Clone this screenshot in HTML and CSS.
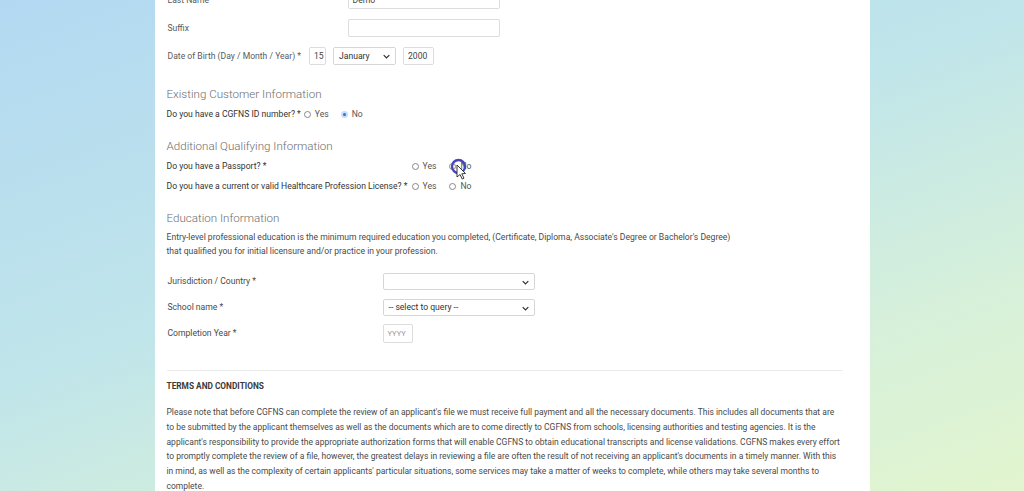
FILE: index.html
```html
<!DOCTYPE html>
<html lang="en">
<head>
    <meta charset="UTF-8">
    <meta name="viewport" content="width=device-width, initial-scale=1.0">
    <title>Application - CGFNS</title>
    <link rel="stylesheet" href="styles.css">
</head>
<body>
    <div class="page">
        <form class="app-form">
            <div class="row">
                <label class="field-label">Last Name *</label>
                <div class="text-input">Demo</div>
            </div>
            <div class="row">
                <label class="field-label">Suffix</label>
                <div class="text-input"></div>
            </div>
            <div class="row dob">
                <label class="dob-label">Date of Birth (Day / Month / Year) *</label>
                <div class="text-input day">15</div>
                <div class="select month">January
                    <svg viewBox="0 0 10 6"><path d="M1 1l4 4 4-4" /></svg>
                </div>
                <div class="text-input year">2000</div>
            </div>

            <h3 class="sec-title">Existing Customer Information</h3>
            <div class="q-row compact">
                <span class="question inline">Do you have a CGFNS ID number? *</span>
                <span class="radio"><i></i>Yes</span>
                <span class="radio checked"><i></i>No</span>
            </div>

            <h3 class="sec-title">Additional Qualifying Information</h3>
            <div class="q-row">
                <span class="question wide">Do you have a Passport? *</span>
                <span class="radio"><i></i>Yes</span>
                <span class="radio"><i></i>No</span>
            </div>
            <div class="q-row">
                <span class="question wide">Do you have a current or valid Healthcare Profession License? *</span>
                <span class="radio"><i></i>Yes</span>
                <span class="radio"><i></i>No</span>
            </div>

            <h3 class="sec-title">Education Information</h3>
            <p class="intro">Entry-level professional education is the minimum required education you completed, (Certificate, Diploma, Associate's Degree or Bachelor's Degree)<br>that qualified you for initial licensure and/or practice in your profession.</p>

            <div class="edu">
                <div class="edu-row">
                    <label class="edu-label">Jurisdiction / Country *</label>
                    <div class="select wide-select">
                        <svg viewBox="0 0 10 6"><path d="M1 1l4 4 4-4" /></svg>
                    </div>
                </div>
                <div class="edu-row">
                    <label class="edu-label">School name *</label>
                    <div class="select wide-select">-- select to query --
                        <svg viewBox="0 0 10 6"><path d="M1 1l4 4 4-4" /></svg>
                    </div>
                </div>
                <div class="edu-row">
                    <label class="edu-label">Completion Year *</label>
                    <div class="text-input yyyy">YYYY</div>
                </div>
            </div>

            <hr class="divider">

            <h4 class="terms-title">TERMS AND CONDITIONS</h4>
            <p class="terms">Please note that before CGFNS can complete the review of an applicant's file we must receive full payment and all the necessary documents. This includes all documents that are to be submitted by the applicant themselves as well as the documents which are to come directly to CGFNS from schools, licensing authorities and testing agencies. It is the applicant's responsibility to provide the appropriate authorization forms that will enable CGFNS to obtain educational transcripts and license validations. CGFNS makes every effort to promptly complete the review of a file, however, the greatest delays in reviewing a file are often the result of not receiving an applicant's documents in a timely manner. With this in mind, as well as the complexity of certain applicants' particular situations, some services may take a matter of weeks to complete, while others may take several months to complete.</p>
        </form>

        <!-- click highlight + mouse pointer from the recording -->
        <svg class="click-mark" viewBox="0 0 30 30">
            <circle cx="8.5" cy="8.5" r="6.5" fill="none" stroke="#4b43b8" stroke-width="2.4" />
            <path d="M7 7 L7 19 L10 16.5 L12.2 21 L14 20.2 L11.8 15.8 L15.5 15.5 Z" fill="#fff" stroke="#222" stroke-width="0.9" stroke-linejoin="round" />
        </svg>
    </div>
</body>
</html>
```

FILE: styles.css
```css
html, body {
    height: 100%;
}

body {
    margin: 0;
    overflow: hidden;
    background: linear-gradient(160deg, #b2d9f2 0%, #c0e5ea 45%, #d6f0da 75%, #e2f5cf 100%);
    font-family: Roboto, "Liberation Sans", sans-serif;
    color: #333333;
}

.page {
    position: relative;
    display: flow-root;
    width: 715px;
    height: 100%;
    margin: 0 auto;
    background-color: #ffffff;
    padding: 0 27px 0 12px;
    box-sizing: border-box;
}

.app-form {
    margin-top: -14px;
    font-size: 8.6px;
}

/* Personal rows */
.row {
    display: flex;
    align-items: center;
    height: 28px;
}

.field-label {
    width: 180px;
    color: #5a5a5a;
    padding-left: 1px;
}

.text-input {
    width: 152px;
    height: 18px;
    border: 1px solid #dcdcdc;
    border-radius: 2px;
    box-sizing: border-box;
    padding: 0 4px;
    display: flex;
    align-items: center;
    color: #444444;
}

.dob-label {
    color: #5a5a5a;
    padding-left: 1px;
    margin-right: 8px;
}

.text-input.day {
    width: 17px;
    margin-right: 7px;
}

.text-input.year {
    width: 31px;
    margin-left: 7px;
}

.select {
    position: relative;
    height: 18px;
    border: 1px solid #d6d6d6;
    border-radius: 2px;
    box-sizing: border-box;
    padding: 0 5px;
    display: flex;
    align-items: center;
    color: #333333;
}

.select svg {
    position: absolute;
    right: 5px;
    top: 6px;
    width: 7px;
    height: 5px;
}

.select svg path {
    fill: none;
    stroke: #333333;
    stroke-width: 1.8;
}

.select.month {
    width: 63px;
}

/* Section headings */
.sec-title {
    margin: 16px 0 2px;
    font-size: 11.6px;
    line-height: 16px;
    font-weight: 300;
    color: #6d6d6d;
}

.q-row {
    display: flex;
    align-items: center;
    height: 20px;
    color: #333333;
}

.question.inline {
    margin-right: 3px;
}

.question.wide {
    width: 245px;
}

.radio {
    display: inline-flex;
    align-items: center;
    margin-right: 13px;
    color: #555555;
}

.q-row.compact .radio {
    margin-right: 12px;
}

.radio i {
    width: 7px;
    height: 7px;
    border: 1px solid #888888;
    border-radius: 50%;
    box-sizing: border-box;
    margin-right: 4px;
}

.radio.checked i {
    border: 2px solid #c9dcf7;
    background-color: #2f74e0;
}

.q-row + .sec-title {
    margin-top: 14px;
}

.intro {
    margin: 4px 0 0;
    line-height: 14px;
    color: #4a4a4a;
}

.edu {
    margin-top: 10px;
}

.edu-row {
    display: flex;
    align-items: center;
    height: 26px;
}

.edu-label {
    width: 215px;
    padding-left: 1px;
    color: #4a4a4a;
}

.select.wide-select {
    width: 152px;
    height: 17px;
}

.text-input.yyyy {
    width: 30px;
    height: 19px;
    color: #999999;
    font-size: 7.5px;
}

.divider {
    margin: 24px 0 0;
    border: 0;
    border-top: 1px solid #ececec;
}

.terms-title {
    margin: 8px 0 0;
    font-size: 8.3px;
    line-height: 14px;
    font-weight: bold;
    color: #3a3a3a;
}

.terms {
    margin: 12px 0 0;
    font-size: 8.5px;
    line-height: 14.8px;
    color: #4a4a4a;
}

.click-mark {
    position: absolute;
    left: 295px;
    top: 158px;
    width: 30px;
    height: 30px;
}
```
